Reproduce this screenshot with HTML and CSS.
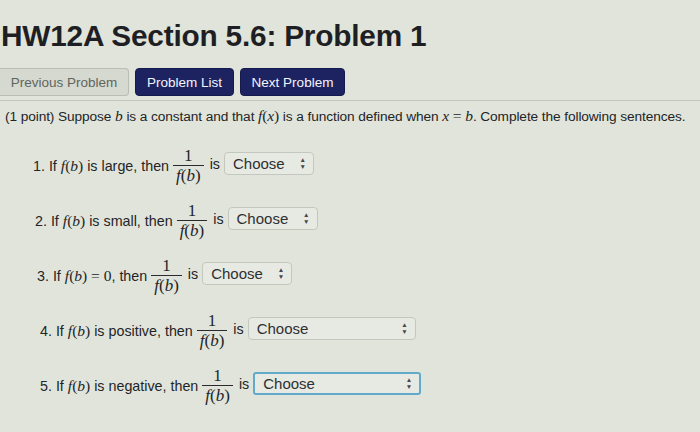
FILE: index.html
```html
<!DOCTYPE html>
<html>
<head>
<meta charset="utf-8">
<link rel="stylesheet" href="styles.css">
</head>
<body>
<div class="page">
  <h1 class="title">HW12A Section 5.6: Problem 1</h1>
  <div class="nav">
    <span class="btn btn-light">Previous Problem</span>
    <span class="btn btn-dark">Problem List</span>
    <span class="btn btn-dark">Next Problem</span>
  </div>
  <div class="rule"></div>
  <p class="intro">(1 point) Suppose <i class="m">b</i> is a constant and that <span class="m"><i>f</i>(<i>x</i>)</span> is a function defined when <span class="m"><i>x</i> = <i>b</i></span>. Complete the following sentences.</p>
  <div class="items">
    <div class="item item-1">
      <span class="lead">1. If <span class="m"><i>f</i>(<i>b</i>)</span> is large, then</span>
      <span class="frac"><span class="num">1</span><span class="den"><i>f</i>(<i>b</i>)</span></span>
      <span class="is">is</span>
      <span class="sel sel-short"><span class="sel-text">Choose</span><span class="arrows">&#9650;<br>&#9660;</span></span>
    </div>
    <div class="item item-2">
      <span class="lead">2. If <span class="m"><i>f</i>(<i>b</i>)</span> is small, then</span>
      <span class="frac"><span class="num">1</span><span class="den"><i>f</i>(<i>b</i>)</span></span>
      <span class="is">is</span>
      <span class="sel sel-short"><span class="sel-text">Choose</span><span class="arrows">&#9650;<br>&#9660;</span></span>
    </div>
    <div class="item item-3">
      <span class="lead">3. If <span class="m"><i>f</i>(<i>b</i>) = 0</span>, then</span>
      <span class="frac"><span class="num">1</span><span class="den"><i>f</i>(<i>b</i>)</span></span>
      <span class="is">is</span>
      <span class="sel sel-short"><span class="sel-text">Choose</span><span class="arrows">&#9650;<br>&#9660;</span></span>
    </div>
    <div class="item item-4">
      <span class="lead">4. If <span class="m"><i>f</i>(<i>b</i>)</span> is positive, then</span>
      <span class="frac"><span class="num">1</span><span class="den"><i>f</i>(<i>b</i>)</span></span>
      <span class="is">is</span>
      <span class="sel sel-long"><span class="sel-text">Choose</span><span class="arrows">&#9650;<br>&#9660;</span></span>
    </div>
    <div class="item item-5">
      <span class="lead">5. If <span class="m"><i>f</i>(<i>b</i>)</span> is negative, then</span>
      <span class="frac"><span class="num">1</span><span class="den"><i>f</i>(<i>b</i>)</span></span>
      <span class="is">is</span>
      <span class="sel sel-long sel-focus"><span class="sel-text">Choose</span><span class="arrows">&#9650;<br>&#9660;</span></span>
    </div>
  </div>
</div>
</body>
</html>
```
FILE: styles.css
```css
html, body {
  margin: 0;
  padding: 0;
  background: #e1e4da;
}
body {
  font-family: "Liberation Sans", Arial, sans-serif;
  color: #232428;
  width: 700px;
  height: 432px;
  overflow: hidden;
}
.page {
  padding-top: 18px;
}
.title {
  margin: 0 0 0 1px;
  font-size: 29.8px;
  font-weight: bold;
  line-height: 36px;
  color: #1e1f24;
  letter-spacing: -0.2px;
}
.nav {
  display: flex;
  gap: 6px;
  margin-top: 14px;
}
.btn {
  display: inline-flex;
  align-items: center;
  justify-content: center;
  height: 28px;
  padding: 0 10px;
  border-radius: 4px;
  font-size: 13.5px;
  box-sizing: border-box;
}
.btn-light {
  width: 129px;
  background: #d5d9cf;
  border: 1px solid #b9bdb3;
  color: #62655f;
  border-left: none;
  border-radius: 0 4px 4px 0;
}
.btn-dark {
  background: #1d2361;
  color: #f4f5fa;
  border: 1px solid #151a4d;
}
.btn-dark:nth-child(2) { width: 99px; }
.btn-dark:nth-child(3) { width: 105px; }
.rule {
  height: 1px;
  background: #c3c7bd;
  margin-top: 4px;
}
.intro {
  margin: 6px 0 0 5px;
  font-size: 13.7px;
  line-height: 18px;
  letter-spacing: -0.1px;
  white-space: nowrap;
}
.m {
  font-family: "Liberation Serif", "Times New Roman", serif;
  font-size: 15.5px;
}
.m i, i.m {
  font-style: italic;
}
.items {
  display: flex;
  flex-direction: column;
  gap: 16px;
  margin-top: 20px;
}
.item {
  display: flex;
  align-items: center;
  font-size: 14.3px;
  height: 39px;
}
.item-1 { padding-left: 33px; }
.item-2 { padding-left: 35px; }
.item-3 { padding-left: 37px; }
.item-4 { padding-left: 40px; }
.item-5 { padding-left: 40px; }
.lead {
  white-space: nowrap;
}
.frac {
  display: inline-flex;
  flex-direction: column;
  align-items: center;
  margin: 0 6px 0 4px;
  font-family: "Liberation Serif", "Times New Roman", serif;
  font-size: 17px;
  line-height: 18px;
}
.num {
  padding: 0 3px;
}
.den {
  border-top: 1px solid #2a2b30;
  padding: 1px 3px 0;
}
.is {
  margin-right: 4px;
  margin-bottom: 4px;
}
.sel {
  display: inline-flex;
  align-items: center;
  justify-content: space-between;
  height: 23px;
  box-sizing: border-box;
  padding: 0 7px 0 8px;
  border: 1px solid #c3c7bd;
  border-radius: 4px;
  background: #e7eae2;
  font-size: 15px;
  color: #2e2f33;
  margin-bottom: 4px;
}
.sel-short { width: 90px; }
.sel-long { width: 168px; }
.sel-focus {
  border: 2px solid #62aacb;
  border-radius: 3px;
}
.arrows {
  font-size: 6.5px;
  line-height: 6.5px;
  color: #44464a;
  text-align: center;
}
```
